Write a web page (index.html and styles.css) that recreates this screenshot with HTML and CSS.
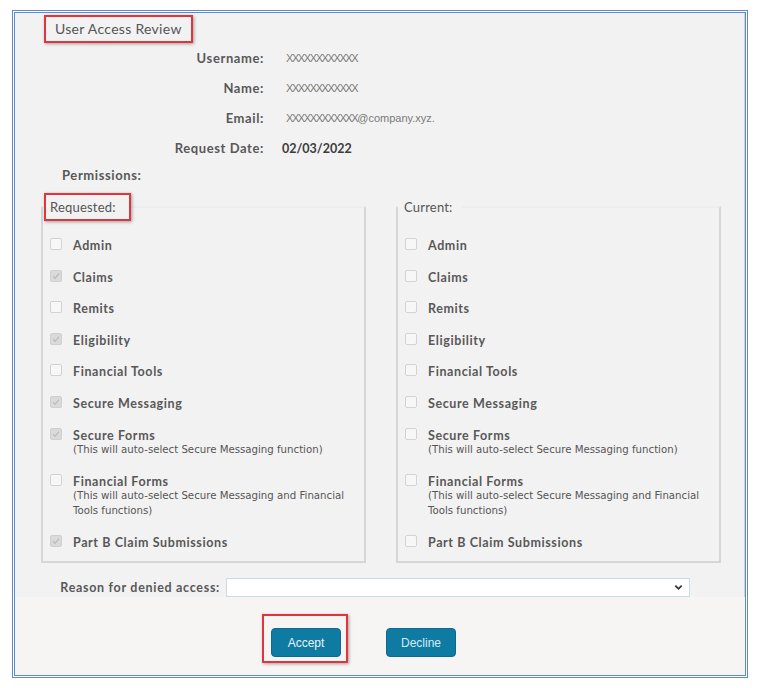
FILE: index.html
```html
<!DOCTYPE html>
<html>
<head>
<meta charset="utf-8">
<link rel="stylesheet" href="styles.css">
</head>
<body>
<div class="frame">
  <div class="review">
    <div class="title-row"><span class="title mark">User Access Review</span></div>
    <div class="info">
      <div class="lbl">Username:</div><div class="val x">XXXXXXXXXXXX</div>
      <div class="lbl">Name:</div><div class="val x">XXXXXXXXXXXX</div>
      <div class="lbl">Email:</div><div class="val x">XXXXXXXXXXXX<span class="mail">@company.xyz.</span></div>
      <div class="lbl">Request Date:</div><div class="val date">02/03/2022</div>
    </div>
    <div class="perm">Permissions:</div>
    <div class="sets">
      <fieldset class="set">
        <legend class="lg mark">Requested:</legend>
        <ul class="items">
          <li class="item"><span class="cb"></span><div class="txt"><div class="name">Admin</div></div></li>
          <li class="item"><span class="cb on"><svg viewBox="0 0 12 12"><path d="M2.5 6.2 L5 8.7 L9.6 3.2"/></svg></span><div class="txt"><div class="name">Claims</div></div></li>
          <li class="item"><span class="cb"></span><div class="txt"><div class="name">Remits</div></div></li>
          <li class="item"><span class="cb on"><svg viewBox="0 0 12 12"><path d="M2.5 6.2 L5 8.7 L9.6 3.2"/></svg></span><div class="txt"><div class="name">Eligibility</div></div></li>
          <li class="item"><span class="cb"></span><div class="txt"><div class="name">Financial Tools</div></div></li>
          <li class="item"><span class="cb on"><svg viewBox="0 0 12 12"><path d="M2.5 6.2 L5 8.7 L9.6 3.2"/></svg></span><div class="txt"><div class="name">Secure Messaging</div></div></li>
          <li class="item sub-item"><span class="cb on"><svg viewBox="0 0 12 12"><path d="M2.5 6.2 L5 8.7 L9.6 3.2"/></svg></span><div class="txt"><div class="name">Secure Forms</div><div class="sub">(This will auto-select Secure Messaging function)</div></div></li>
          <li class="item sub-item"><span class="cb"></span><div class="txt"><div class="name">Financial Forms</div><div class="sub">(This will auto-select Secure Messaging and Financial Tools functions)</div></div></li>
          <li class="item"><span class="cb on"><svg viewBox="0 0 12 12"><path d="M2.5 6.2 L5 8.7 L9.6 3.2"/></svg></span><div class="txt"><div class="name">Part B Claim Submissions</div></div></li>
        </ul>
      </fieldset>
      <fieldset class="set">
        <legend class="lg plain">Current:</legend>
        <ul class="items">
          <li class="item"><span class="cb"></span><div class="txt"><div class="name">Admin</div></div></li>
          <li class="item"><span class="cb"></span><div class="txt"><div class="name">Claims</div></div></li>
          <li class="item"><span class="cb"></span><div class="txt"><div class="name">Remits</div></div></li>
          <li class="item"><span class="cb"></span><div class="txt"><div class="name">Eligibility</div></div></li>
          <li class="item"><span class="cb"></span><div class="txt"><div class="name">Financial Tools</div></div></li>
          <li class="item"><span class="cb"></span><div class="txt"><div class="name">Secure Messaging</div></div></li>
          <li class="item sub-item"><span class="cb"></span><div class="txt"><div class="name">Secure Forms</div><div class="sub">(This will auto-select Secure Messaging function)</div></div></li>
          <li class="item sub-item"><span class="cb"></span><div class="txt"><div class="name">Financial Forms</div><div class="sub">(This will auto-select Secure Messaging and Financial Tools functions)</div></div></li>
          <li class="item"><span class="cb"></span><div class="txt"><div class="name">Part B Claim Submissions</div></div></li>
        </ul>
      </fieldset>
    </div>
    <div class="reason">
      <span class="reason-lbl">Reason for denied access:</span>
      <div class="select"><svg class="chev" viewBox="0 0 10 7"><path d="M1.5 1.5 L5 5 L8.5 1.5"/></svg></div>
    </div>
  </div>
  <div class="footer">
    <span class="btn-mark mark"><button class="btn">Accept</button></span>
    <button class="btn decline">Decline</button>
  </div>
</div>
</body>
</html>
```

FILE: styles.css
```css
html, body {
  margin: 0;
  padding: 0;
  background: #ffffff;
}

body {
  font-family: "Lato", "Open Sans", sans-serif;
  color: #555555;
}

.frame {
  margin: 10px 0 0 12px;
  width: 730px;
  height: 662px;
  border: 3px double #5d8bcd;
  background: #f2f2f2;
  background-clip: padding-box;
  display: flex;
  flex-direction: column;
}

.review {
  height: 584px;
  background: #f2f2f2;
  border-right: 1px solid #cdd3da;
  box-sizing: border-box;
}

.mark {
  border: 2px solid #e2353b;
  box-shadow: 1px 1px 3px rgba(0, 0, 0, 0.35);
}

.title-row {
  padding: 2px 0 0 29px;
  height: 28px;
}

.title {
  display: inline-block;
  box-sizing: border-box;
  width: 149px;
  height: 28px;
  padding: 0 9px;
  line-height: 24px;
  font-size: 14px;
  letter-spacing: 0.3px;
  color: #555555;
  white-space: nowrap;
}

.info {
  display: grid;
  grid-template-columns: 249px 1fr;
  column-gap: 22px;
  grid-auto-rows: 30px;
  align-items: center;
}

.lbl {
  text-align: right;
  font-weight: 700;
  font-size: 13px;
  letter-spacing: 0.6px;
  color: #585858;
}

.val.x {
  font-family: "Liberation Sans", Arial, sans-serif;
  font-size: 11px;
  letter-spacing: -1.4px;
  color: #7a7a7a;
}

.val .mail {
  letter-spacing: 0;
}

.val.date {
  margin-left: -4px;
  font-weight: 700;
  font-size: 12.5px;
  color: #3c3c3c;
  letter-spacing: 0;
}

.perm {
  padding-left: 47px;
  line-height: 24px;
  font-weight: 700;
  font-size: 13px;
  letter-spacing: 0.6px;
  color: #585858;
}

.sets {
  display: flex;
  gap: 30px;
  margin-top: 6px;
  padding-left: 26px;
}

.set {
  width: 325px;
  box-sizing: border-box;
  margin: 0;
  padding: 0;
  border: 2px solid #d6d6d6;
  border-top-color: #ededed;
  min-inline-size: 0;
}

.lg {
  box-sizing: border-box;
  height: 28px;
  line-height: 24px;
  padding: 0 6px 0 4px;
  font-size: 13px;
  letter-spacing: 0.2px;
  color: #555555;
}

.lg.mark {
  margin-left: 1px;
  width: 87px;
}

.lg.plain {
  margin-left: 0;
  border: 2px solid transparent;
}

.items {
  list-style: none;
  margin: 0;
  padding: 17px 0 10px 7px;
}

.item {
  display: flex;
  gap: 11px;
  margin-bottom: 15.6px;
}

.item.sub-item {
  margin-bottom: 17px;
}

.item:last-child {
  margin-bottom: 0;
}

.cb {
  flex: none;
  width: 12px;
  height: 12px;
  box-sizing: border-box;
  border: 1px solid #d3d3d3;
  border-radius: 2px;
  background: #f7f7f7;
  display: flex;
}

.cb.on {
  background: #dadada;
  border-color: #d0d0d0;
}

.cb svg {
  width: 10px;
  height: 10px;
}

.cb svg path {
  fill: none;
  stroke: #bdbdbd;
  stroke-width: 1.6;
}

.name {
  line-height: 16px;
  font-weight: 700;
  font-size: 12.5px;
  color: #585858;
  letter-spacing: 0.6px;
}

.sub {
  margin-top: -2px;
  line-height: 15px;
  font-family: "DejaVu Sans", Verdana, sans-serif;
  font-size: 10.2px;
  color: #555555;
  width: 282px;
}

.reason {
  display: flex;
  align-items: center;
  gap: 6px;
  margin-top: 15px;
  padding-left: 40px;
}

.reason-lbl {
  width: 165px;
  text-align: right;
  font-weight: 700;
  font-size: 12.5px;
  color: #585858;
  letter-spacing: 0.7px;
  white-space: nowrap;
}

.select {
  width: 464px;
  height: 19px;
  box-sizing: border-box;
  border: 1px solid #c9dde9;
  background: #ffffff;
  display: flex;
  align-items: center;
  justify-content: flex-end;
  padding-right: 6px;
}

.chev {
  width: 9px;
  height: 7px;
}

.chev path {
  fill: none;
  stroke: #333333;
  stroke-width: 2;
}

.footer {
  flex: 1;
  background: #f6f5f4;
  display: flex;
  align-items: flex-start;
  gap: 38px;
  padding: 17px 0 0 247px;
}

.btn-mark {
  display: inline-block;
  padding: 12px 5px 4px 7px;
  line-height: 0;
}

.btn {
  width: 70px;
  height: 29px;
  border: 1px solid #0b6b8f;
  border-radius: 4px;
  background: #0f7ba2;
  color: #e8f4fb;
  font-family: "Liberation Sans", Arial, sans-serif;
  font-size: 12px;
  padding: 0;
  margin: 0;
}

.btn.decline {
  margin-top: 14px;
  color: #d4ebf7;
}
```
